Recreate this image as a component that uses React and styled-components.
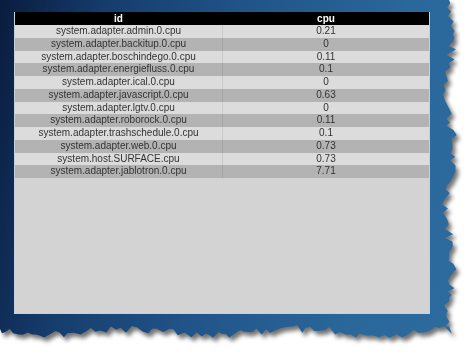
import React from "react";
import styled, { createGlobalStyle } from "styled-components";

const GlobalStyle = createGlobalStyle`
  body {
    margin: 0;
    background: #ffffff;
    font-family: "Liberation Sans", Arial, sans-serif;
  }
`;

// jagged torn-paper outline, seeded so it stays the same on every render
const makeTornEdge = () => {
  let seed = 7;
  const rnd = () => {
    seed = (seed * 9301 + 49297) % 233280;
    return seed / 233280;
  };
  const pts = ["0px 0px", "449px 0px"];
  for (let y = 3; y <= 330; y += 3 + rnd() * 3) {
    const x = 450 + (rnd() - 0.5) * 10 + Math.sin(y / 19) * 3;
    pts.push(`${x.toFixed(1)}px ${y.toFixed(1)}px`);
  }
  pts.push("452px 334px");
  for (let x = 449; x >= 0; x -= 3 + rnd() * 4) {
    const y = 332 + (rnd() - 0.5) * 8 + Math.sin(x / 27) * 3;
    pts.push(`${x.toFixed(1)}px ${y.toFixed(1)}px`);
  }
  pts.push("0px 329px");
  return pts.join(", ");
};

const tornEdge = makeTornEdge();

const Scene = styled.div`
  width: 474px;
  height: 357px;
  overflow: hidden;
  background: #ffffff;
`;

const Shadow = styled.div`
  width: 464px;
  height: 347px;
  filter: drop-shadow(3px 4px 2px rgba(0, 0, 0, 0.55));
`;

const Torn = styled.div`
  width: 464px;
  height: 347px;
  box-sizing: border-box;
  padding: 12px 0 0 14px;
  clip-path: polygon(${tornEdge});
  background: linear-gradient(
    100deg,
    #0a1c3e 0%,
    #153c6c 20%,
    #21558a 48%,
    #2a679a 78%,
    #2d6c9f 100%
  );
`;

const Panel = styled.div`
  width: 416px;
  height: 302px;
  box-sizing: border-box;
  background: #d3d3d3;
  border: 1px solid #c4d2df;
  border-top: none;
`;

const Row = styled.div`
  display: grid;
  grid-template-columns: 207px 1fr;
  height: ${({ $head }) => ($head ? "13px" : "12.75px")};
  line-height: ${({ $head }) => ($head ? "13px" : "12.75px")};
  background: ${({ $head, $alt }) =>
    $head ? "#000000" : $alt ? "#b3b3b3" : "#dcdcdc"};
  color: ${({ $head }) => ($head ? "#ffffff" : "#333333")};
  font-weight: ${({ $head }) => ($head ? "bold" : "normal")};
  font-size: 10px;
`;

const Cell = styled.div`
  text-align: center;
  white-space: nowrap;
  overflow: hidden;
  & + & {
    border-left: 1px solid ${({ $head }) => ($head ? "#9a9a9a" : "rgba(0,0,0,0.08)")};
  }
`;

const rows = [
  ["system.adapter.admin.0.cpu", "0.21"],
  ["system.adapter.backitup.0.cpu", "0"],
  ["system.adapter.boschindego.0.cpu", "0.11"],
  ["system.adapter.energiefluss.0.cpu", "0.1"],
  ["system.adapter.ical.0.cpu", "0"],
  ["system.adapter.javascript.0.cpu", "0.63"],
  ["system.adapter.lgtv.0.cpu", "0"],
  ["system.adapter.roborock.0.cpu", "0.11"],
  ["system.adapter.trashschedule.0.cpu", "0.1"],
  ["system.adapter.web.0.cpu", "0.73"],
  ["system.host.SURFACE.cpu", "0.73"],
  ["system.adapter.jablotron.0.cpu", "7.71"],
];

export default function App() {
  return (
    <Scene>
      <GlobalStyle />
      <Shadow>
        <Torn>
          <Panel>
            <Row $head>
              <Cell $head>id</Cell>
              <Cell $head>cpu</Cell>
            </Row>
            {rows.map(([id, cpu], i) => (
              <Row key={id} $alt={i % 2 === 1}>
                <Cell>{id}</Cell>
                <Cell>{cpu}</Cell>
              </Row>
            ))}
          </Panel>
        </Torn>
      </Shadow>
    </Scene>
  );
}
